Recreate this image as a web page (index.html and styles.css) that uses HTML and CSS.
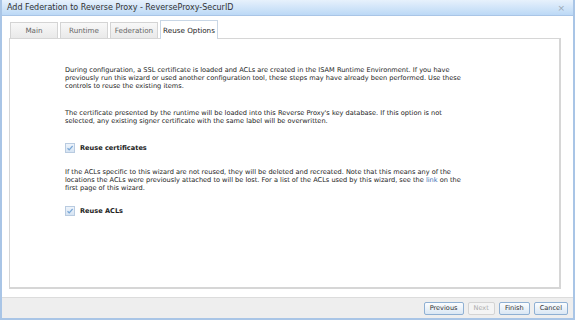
FILE: index.html
```html
<!DOCTYPE html>
<html lang="en">
<head>
    <meta charset="UTF-8">
    <title>Add Federation to Reverse Proxy</title>
    <link rel="stylesheet" href="styles.css">
</head>
<body>
    <div class="dialog">
        <div class="titlebar">
            <span class="title">Add Federation to Reverse Proxy - ReverseProxy-SecurID</span>
            <span class="close">&#215;</span>
        </div>
        <div class="content">
            <div class="tabs">
                <div class="tab">Main</div>
                <div class="tab">Runtime</div>
                <div class="tab">Federation</div>
                <div class="tab active">Reuse Options</div>
            </div>
            <div class="panel">
                <p class="intro">During configuration, a SSL certificate is loaded and ACLs are created in the ISAM Runtime Environment. If you have previously run this wizard or used another configuration tool, these steps may have already been performed. Use these controls to reuse the existing items.</p>
                <p class="cert-info">The certificate presented by the runtime will be loaded into this Reverse Proxy's key database. If this option is not selected, any existing signer certificate with the same label will be overwritten.</p>
                <label class="check"><span class="box"><svg width="8" height="8" viewBox="0 0 8 8"><path d="M1.5 4.2 L3.2 5.8 L6.6 2" fill="none" stroke="#7aa7d6" stroke-width="1.2"/></svg></span>Reuse certificates</label>
                <p class="acl-info">If the ACLs specific to this wizard are not reused, they will be deleted and recreated. Note that this means any of the locations the ACLs were previously attached to will be lost. For a list of the ACLs used by this wizard, see the <a href="#">link</a> on the first page of this wizard.</p>
                <label class="check"><span class="box"><svg width="8" height="8" viewBox="0 0 8 8"><path d="M1.5 4.2 L3.2 5.8 L6.6 2" fill="none" stroke="#7aa7d6" stroke-width="1.2"/></svg></span>Reuse ACLs</label>
            </div>
        </div>
        <div class="footer">
            <button class="btn">Previous</button>
            <button class="btn" disabled>Next</button>
            <button class="btn">Finish</button>
            <button class="btn">Cancel</button>
        </div>
    </div>
</body>
</html>
```

FILE: styles.css
```css
body {
    margin: 0;
    font-family: Tahoma, 'DejaVu Sans', Verdana, sans-serif;
    background: #ffffff;
}
.dialog {
    width: 571px;
    height: 318px;
    border-left: 2px solid #a9c5e6;
    border-right: 2px solid #a9c5e6;
    border-bottom: 2px solid #a9c5e6;
    display: flex;
    flex-direction: column;
    background: #ffffff;
}
.titlebar {
    height: 15px;
    display: flex;
    align-items: center;
    justify-content: space-between;
    padding: 0 8px 0 5px;
    background: linear-gradient(#e7f1fc, #bcd9f6);
    border-bottom: 1px solid #a9c5e6;
}
.title {
    font-family: 'DejaVu Sans', sans-serif;
    font-size: 8px;
    color: #333;
}
.close {
    font-family: 'DejaVu Sans', sans-serif;
    font-size: 9px;
    color: #9aa8b5;
}
.content {
    flex: 1;
    padding: 3px 12px 8px 7px;
    display: flex;
    flex-direction: column;
}
.tabs {
    display: flex;
    align-items: flex-end;
    gap: 2px;
    height: 19px;
    margin-left: 1px;
}
.tab {
    width: 46px;
    height: 15px;
    line-height: 15px;
    text-align: center;
    font-family: 'DejaVu Sans', sans-serif;
    font-size: 7.2px;
    color: #666;
    background: linear-gradient(#f8f8f8, #e9e9e9);
    border: 1px solid #d4d4d4;
    border-bottom: none;
}
.tab.active {
    width: 56px;
    height: 18px;
    line-height: 19px;
    color: #222;
    background: #ffffff;
    border-color: #c9d7e6;
    margin-bottom: -1px;
    position: relative;
}
.panel {
    flex: 1;
    border: 1px solid #d6d6d6;
    border-bottom-width: 2px;
    border-right-width: 2px;
    padding: 27px 20px 0 55px;
    font-family: 'DejaVu Sans', sans-serif;
    font-size: 6.6px;
    line-height: 8px;
    color: #222;
}
.panel p {
    margin: 0;
    width: 400px;
}
.intro {
    margin-bottom: 19px !important;
}
.cert-info {
    margin-bottom: 18px !important;
}
.acl-info {
    margin-bottom: 14px !important;
}
.panel a {
    color: #3a6fb5;
    text-decoration: none;
}
.check {
    display: flex;
    align-items: center;
    gap: 5px;
    font-weight: bold;
    margin-bottom: 15px;
}
.box {
    width: 8px;
    height: 8px;
    border: 1px solid #b9cbe0;
    background: linear-gradient(#eef4fb, #d6e4f3);
    display: flex;
}
.footer {
    height: 20px;
    background: #eeeeee;
    border-top: 1px solid #dcdcdc;
    display: flex;
    justify-content: flex-end;
    align-items: center;
    gap: 4px;
    padding: 0 5px;
}
.btn {
    height: 13px;
    padding: 0 5px;
    font-family: 'DejaVu Sans', sans-serif;
    font-size: 6.6px;
    color: #333;
    background: linear-gradient(#fbfdff, #dae7f4);
    border: 1px solid #8fb0d3;
    border-radius: 2px;
}
.btn:disabled {
    color: #aaa;
    background: #f4f4f4;
    border-color: #d4d4d4;
}
```
